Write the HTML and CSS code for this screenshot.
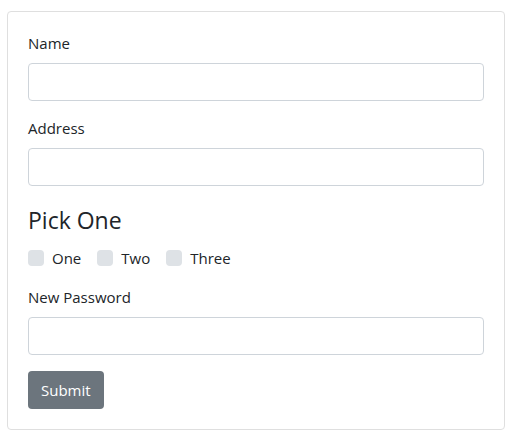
FILE: index.html
```html
<!DOCTYPE html>
<html lang="en">
<head>
<meta charset="utf-8">
<title>Form</title>
<link rel="stylesheet" href="styles.css">
</head>
<body>
<div class="card">
  <form class="form">
    <div class="group">
      <label class="label" for="name">Name</label>
      <input class="input" id="name" type="text">
    </div>
    <div class="group">
      <label class="label" for="address">Address</label>
      <input class="input" id="address" type="text">
    </div>
    <h4 class="heading">Pick One</h4>
    <div class="checks">
      <label class="check"><span class="box"></span><span class="check-text">One</span></label>
      <label class="check"><span class="box"></span><span class="check-text">Two</span></label>
      <label class="check"><span class="box"></span><span class="check-text">Three</span></label>
    </div>
    <div class="group">
      <label class="label" for="pw">New Password</label>
      <input class="input" id="pw" type="password">
    </div>
    <button class="btn" type="button">Submit</button>
  </form>
</div>
</body>
</html>
```
FILE: styles.css
```css
html, body {
  margin: 0;
  padding: 0;
  background: #fff;
}
body {
  font-family: "Open Sans", "Noto Sans", sans-serif;
  font-size: 15px;
  line-height: 24px;
  color: #212529;
}
.card {
  margin: 11px 10px 0 7px;
  border: 1px solid #dfdfdf;
  border-radius: 4px;
  padding: 19px 20px 20px 20px;
}
.form {
  display: flex;
  flex-direction: column;
  margin: 0;
}
.group {
  display: flex;
  flex-direction: column;
  margin-bottom: 15px;
}
.label {
  display: block;
  margin-bottom: 8px;
  height: 24px;
}
.input {
  box-sizing: border-box;
  height: 38px;
  width: 100%;
  border: 1px solid #ced4da;
  border-radius: 4px;
  padding: 6px 12px;
  font: inherit;
  margin: 0;
  background: #fff;
}
.heading {
  margin: 1px 0 11px 0;
  padding-top: 4px;
  font-size: 23px;
  font-weight: 400;
  line-height: 29px;
}
.checks {
  display: flex;
  align-items: center;
  gap: 16px;
  height: 24px;
  margin-bottom: 15px;
}
.check {
  display: flex;
  align-items: center;
  gap: 8px;
}
.box {
  width: 16px;
  height: 16px;
  border-radius: 4px;
  background: #dee2e6;
}
.btn {
  align-self: flex-start;
  height: 38px;
  padding: 0 13px;
  border: none;
  border-radius: 4px;
  background: #6c757d;
  color: #fff;
  font: inherit;
  font-size: 15px;
  margin-top: 1px;
}
```
